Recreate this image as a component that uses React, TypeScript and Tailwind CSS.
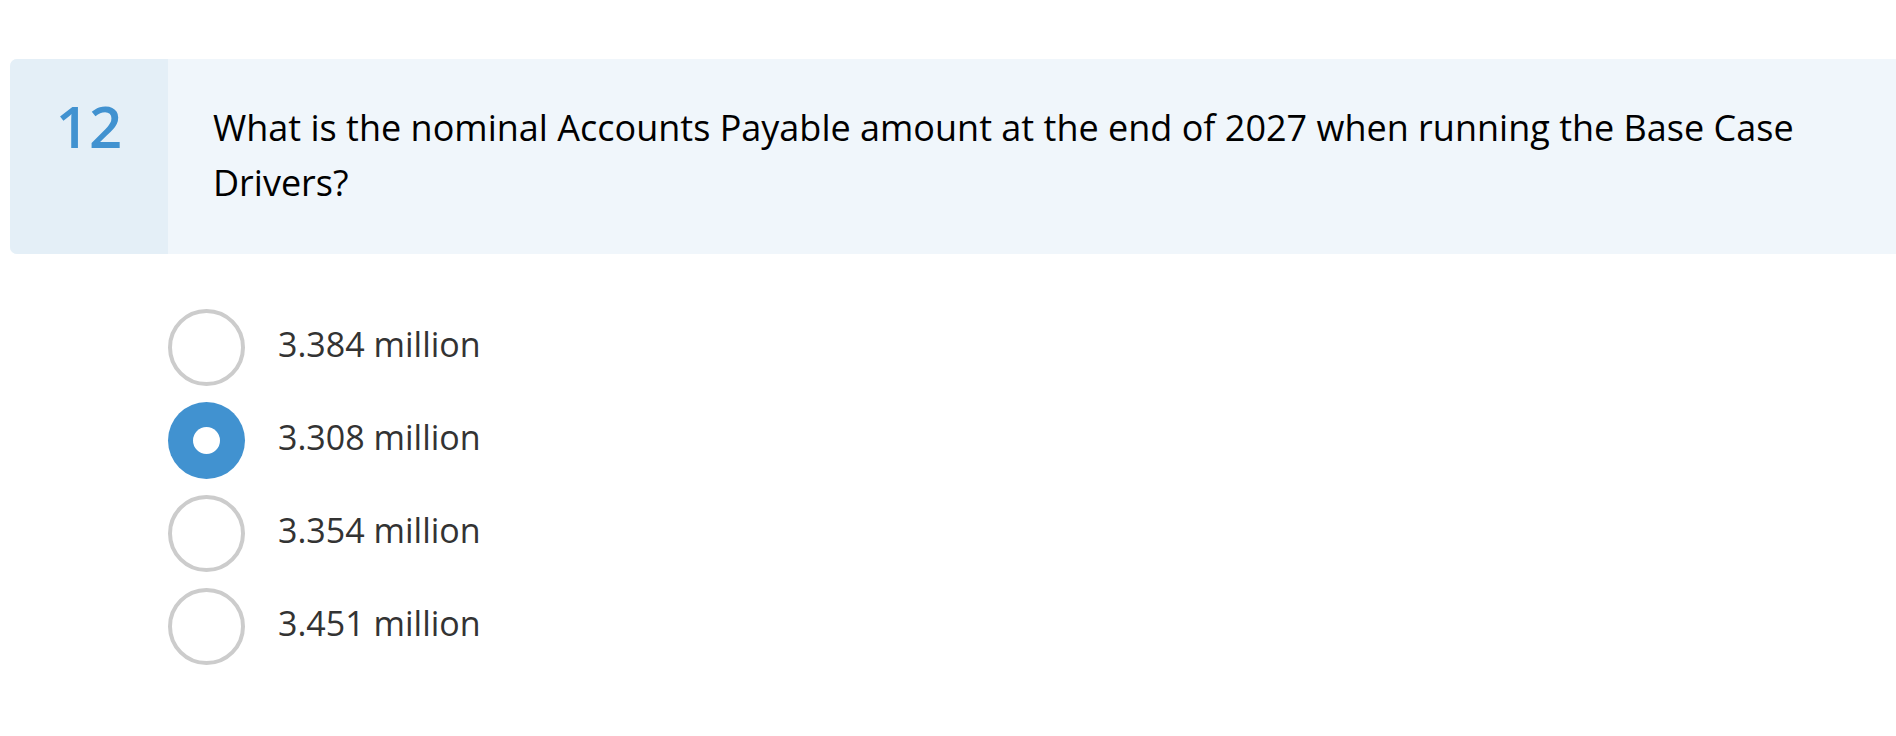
import * as React from "react"

const options = ["3.384 million", "3.308 million", "3.354 million", "3.451 million"]

function Radio({ checked }: { checked: boolean }) {
  if (checked) {
    return (
      <span className="flex h-[77px] w-[77px] shrink-0 items-center justify-center rounded-full bg-[#4192d0]">
        <span className="h-[27px] w-[27px] rounded-full bg-white" />
      </span>
    )
  }
  return <span className="block h-[77px] w-[77px] shrink-0 rounded-full border-[4px] border-[#cccccc] bg-white" />
}

export default function App() {
  const [selected, setSelected] = React.useState(1)

  return (
    <div className="min-h-[736px] w-full overflow-hidden bg-white font-['Open_Sans',sans-serif]">
      <div className="pt-[59px] pl-[10px]">
        <div className="flex min-h-[195px] overflow-hidden rounded-l-[7px] bg-[#f0f6fb]">
          <div className="w-[158px] shrink-0 bg-[#e4eff7] pt-[38px] text-center text-[58px] font-semibold leading-none text-[#4192d0]">
            12
          </div>
          <div className="flex-1 pl-[45px] pr-[60px] pt-[41px] pb-[43px] text-[36px] leading-[55px] text-black">
            What is the nominal Accounts Payable amount at the end of 2027 when running the Base Case Drivers?
          </div>
        </div>
      </div>

      <div className="flex flex-col gap-[16px] pl-[168px] pt-[55px]">
        {options.map((opt, i) => (
          <label
            key={opt}
            className="flex cursor-pointer items-center gap-[33px]"
            onClick={() => setSelected(i)}
          >
            <Radio checked={selected === i} />
            <span className="pb-[8px] text-[34px] leading-none text-[#333333]">{opt}</span>
          </label>
        ))}
      </div>
    </div>
  )
}
